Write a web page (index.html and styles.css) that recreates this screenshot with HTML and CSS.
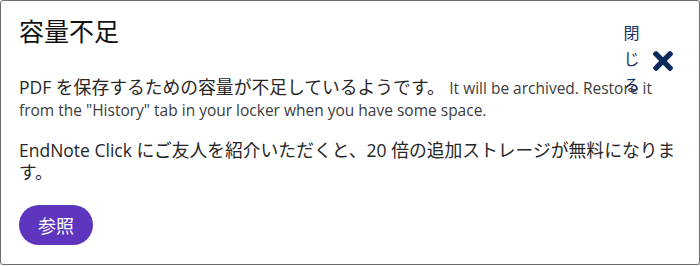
FILE: index.html
```html
<!DOCTYPE html>
<html lang="ja">
<head>
<meta charset="utf-8">
<link rel="stylesheet" href="styles.css">
</head>
<body>
<div class="dialog">
  <h2 class="title">容量不足</h2>
  <p class="msg">PDF <span class="ja">を保存するための容量が不足しているようです。</span> <span class="en">It will be archived. Restore it from the "History" tab in your locker when you have some space.</span></p>
  <p class="msg">EndNote Click <span class="ja">にご友人を紹介いただくと、</span>20 <span class="ja">倍の追加ストレージが無料になります。</span></p>
  <button class="browse">参照</button>
  <button class="close">
    <span class="close-label">閉じる</span>
    <svg class="close-icon" viewBox="0 80 352 352" width="20" height="20" aria-hidden="true"><path fill="#0d2a5c" d="M242.72 256l100.07-100.07c12.28-12.28 12.28-32.19 0-44.48l-22.24-22.24c-12.28-12.28-32.19-12.28-44.48 0L176 189.28 75.930 89.210c-12.28-12.28-32.19-12.28-44.48 0L9.21 111.45c-12.28 12.28-12.28 32.19 0 44.48L109.28 256 9.21 356.070c-12.28 12.280-12.28 32.19 0 44.48l22.24 22.24c12.28 12.28 32.2 12.28 44.48 0L176 322.72l100.07 100.07c12.28 12.28 32.2 12.28 44.48 0l22.24-22.240c12.28-12.28 12.28-32.19 0-44.48L242.72 256z"/></svg>
  </button>
</div>
</body>
</html>
```
FILE: styles.css
```css
html, body {
  margin: 0;
  padding: 0;
  background: #fff;
}
.dialog {
  position: relative;
  box-sizing: border-box;
  width: 700px;
  height: 265px;
  border: 1px solid #6e6e6e;
  border-radius: 3px;
  box-shadow: 1px 1px 2px rgba(0,0,0,0.45);
  padding: 13px 20px 0 18px;
  font-family: "Open Sans", "Noto Sans CJK JP", sans-serif;
  color: #262626;
}
.title {
  margin: 0 0 30px 0;
  font-family: "Noto Sans CJK JP", sans-serif;
  font-weight: 400;
  font-size: 25px;
  line-height: 32px;
  color: #111;
}
.msg {
  margin: 0 0 18px 0;
  font-size: 17.5px;
  line-height: 21px;
  width: 662px;
}
.msg + .msg {
  margin-bottom: 22px;
}
.ja {
  font-family: "Noto Sans CJK JP", sans-serif;
  font-size: 17.8px;
}
.en {
  font-size: 15.5px;
  color: #3c3c3c;
}
.browse {
  display: block;
  margin-top: 0;
  width: 74px;
  height: 40px;
  border: 0;
  border-radius: 20px;
  background: #5d35bf;
  color: #fff;
  font-family: "Noto Sans CJK JP", sans-serif;
  font-size: 18px;
  padding: 0;
}
.close {
  position: absolute;
  top: 18px;
  right: 26px;
  display: flex;
  align-items: center;
  gap: 13px;
  border: 0;
  background: transparent;
  padding: 0;
  color: #1d3366;
}
.close-label {
  width: 17px;
  font-family: "Noto Sans CJK JP", sans-serif;
  font-size: 16px;
  line-height: 26px;
  text-align: center;
}
.close-icon {
  display: block;
  margin-top: 6px;
}
```
